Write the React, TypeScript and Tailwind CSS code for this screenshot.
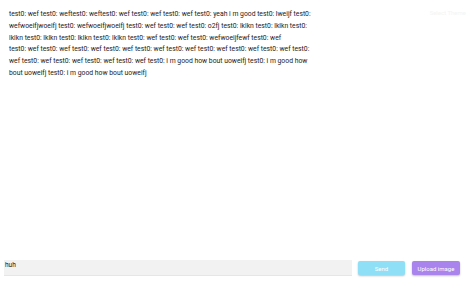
import React from "react";

const lines: string[] = [
  "test0: wef test0: weftest0: weftest0: wef test0: wef test0: wef test0: yeah i m good test0: lweijf test0:",
  "wefwoeifjwoeifj test0: wefwoeifjwoeifj test0: wef test0: wef test0: o2fj test0: lklkn test0: lklkn test0:",
  "lklkn test0: lklkn test0: lklkn test0: lklkn test0: wef test0: wef test0: wefwoeijfewf test0: wef",
  "test0: wef test0: wef test0: wef test0: wef test0: wef test0: wef test0: wef test0: wef test0: wef test0:",
  "wef test0: wef test0: wef test0: wef test0: wef test0: i m good how bout uoweifj test0: i m good how",
  "bout uoweifj test0: i m good how bout uoweifj",
];

export default function App() {
  return (
    <div
      className="relative flex h-[289px] w-[474px] flex-col bg-white text-[#1a1a1a]"
      style={{ fontFamily: "Roboto, 'Liberation Sans', Arial, sans-serif" }}
    >
      <div className="absolute right-[8px] top-[8px] text-[6px] text-[#f4f4f4]">Select Theme</div>
      <div className="flex-1 px-[9px] pt-[9px]">
        <p className="text-[6.8px] leading-[11.8px]">
          {lines.map((l, i) => (
            <span key={i} className="block whitespace-nowrap">
              {l}
            </span>
          ))}
        </p>
      </div>
      <div className="flex items-start gap-[5px] px-[4px] pb-[13px]">
        <div className="h-[16px] w-[348px] border-b border-[#e6e6e6] bg-[#f2f2f2] px-[1px] pt-[1px] text-[6.5px] leading-[8px] text-[#111]">
          huh
        </div>
        <div className="ml-[1px] mt-[1px] flex h-[14px] w-[47px] items-center justify-center rounded-[2px] bg-[#8fdff7] text-[6px] text-white shadow-[0_1px_2px_rgba(0,0,0,0.25)]">
          Send
        </div>
        <div className="ml-[2px] mt-[1px] flex h-[14px] w-[48px] items-center justify-center rounded-[2px] bg-[#a984ed] text-[6px] text-white shadow-[0_1px_2px_rgba(0,0,0,0.25)]">
          Upload image
        </div>
      </div>
    </div>
  );
}
